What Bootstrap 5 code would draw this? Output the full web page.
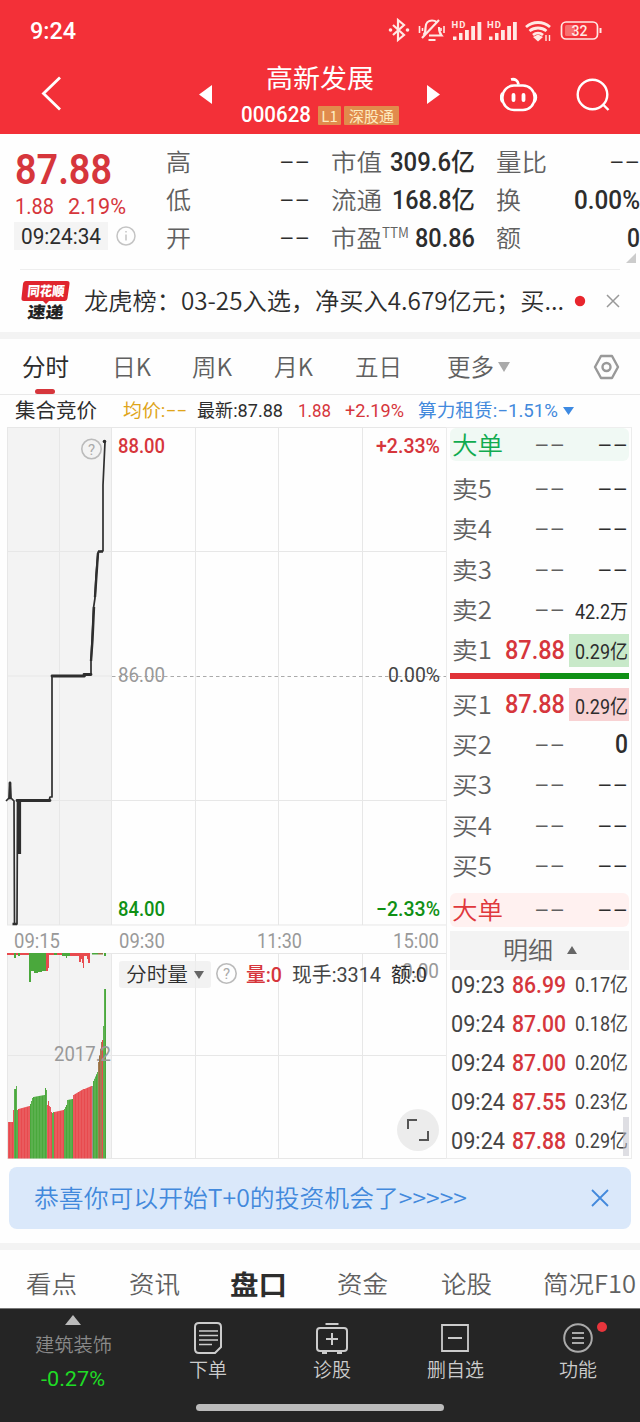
<!DOCTYPE html>
<html lang="zh-CN">
<head>
<meta charset="utf-8">
<meta name="viewport" content="width=device-width, initial-scale=1">
<title>高新发展 000628</title>
<link href="https://cdn.jsdelivr.net/npm/bootstrap@5.3.0/dist/css/bootstrap.min.css" rel="stylesheet">
<style>
:root{--up:#d6363c;--down:#0f9015;--ink:#2d2d2d;--sub:#606060}
body{width:640px;background:#fefefe;color:var(--ink);font-family:"Noto Sans CJK SC",sans-serif;font-weight:350;font-size:24px;line-height:1;overflow-x:hidden}
svg{display:block;flex:none}
.num{font-family:Roboto,"Noto Sans CJK SC",sans-serif;font-weight:400}
.fit{display:inline-block;white-space:pre;transform-origin:0 50%;flex:none;padding-bottom:2px}
.num .fit,.fit.num{padding-bottom:0}
.semi{font-weight:500}
.fit.num.semi{font-size:25px}
.up{color:var(--up)}.down{color:var(--down)}.sub{color:var(--sub)}.ink{color:var(--ink)}
.app-head{background:#f33038;color:#fff;height:134px}
.status{height:61px;padding:0 37px 0 30px}
.titlebar{height:73px;display:grid;grid-template-columns:199px 42px 158px 28px 73px 140px}
.tag{background:#e18b4c;color:#fdebc0;height:19px;font-size:15px;font-weight:400;border-radius:1px}
.quote{height:135px;padding-top:9px}
.quote-main{width:166px;padding-left:15px}
.quote-col{width:144px}
.quote-col+.quote-col{margin-left:21px}
.quote-col>div{height:38px}
.time-chip{background:#f4f4f4;width:94px;height:28px;margin-left:-1px;font-size:22.500px}
.corner{right:4px;bottom:6px}
.fit.dash{padding-bottom:6px}
.news{height:63px;margin:0 20px;border-top:1px solid #eee}
.strip{height:7px;background:#f3f3f3}
.tabs{height:56px;border-bottom:1px solid #e9e9e9;color:var(--sub)}
.tabs>div,.tabs2>div{height:100%;display:flex;align-items:center}
.mark-line{left:13px;bottom:0;width:20px;height:5.5px;background:var(--up);border-radius:3px}
.legend{height:32px;padding-left:15px;font-size:18px}
.main{height:732px}
.chart{width:446px;height:732px}
.book{width:186px;border:1px solid #ececec;border-top-color:#eee;padding:0 2px 0 3px}
.book-row{height:40.3px;padding:0 1px 0 2px;display:grid;grid-template-columns:56px 57px 1fr;align-items:center}
.big-row{border-radius:6px}
.book-row>:nth-child(1){justify-self:start}
.book-row>:nth-child(2),.book-row>:nth-child(3){justify-self:end}
.vol-cell{width:60px;height:33px;margin-right:-1px;padding:4px 1px 0 0;display:flex;align-items:center;justify-content:flex-end;font-size:20px}
.sell-best{background:#c8e9c9}.buy-best{background:#f8d2d3}
.ratio-bar{height:6px;background:var(--down);margin:3px 0 5px}
.ratio-bar div{height:6px;background:#e03238}
.detail-head{height:39px;background:#f3f3f3;color:var(--sub)}
#ticks{margin-top:-4px}
.tick{height:39px;padding:0 2px 0 1px;color:#444}
.pill{left:119px;top:534px;width:92px;height:27px;background:rgba(237,237,237,.75);border-radius:3px;font-size:20px}
.pill-info{left:216px;top:534px;height:27px;font-size:20px}
.pill-info .semi{font-size:20px}
.expand{left:397px;top:682px;width:42px;height:42px;background:#ececec}
.scroller{right:2px;bottom:2px;width:6px;height:39px;background:rgba(190,190,200,.5)}
.notice{height:62px;margin:8px 9px 14px;padding:0 22px 0 25px;border-radius:8px;background:#dae8fa;color:#4289dc}
.tabs2{height:58px;color:var(--sub);padding-top:10px}
.dock{height:114px;background:#252525;color:#ccc;border-top:1px solid #777}
.dock-item{width:123.5px;padding-top:12px;font-size:19px}
.dock-item svg{margin-bottom:4px}
.home-bar{left:196px;top:95px;width:248px;height:7px;border-radius:4px;background:#bbb}
</style>
</head>
<body>
<header class="app-head">
  <div class="status d-flex align-items-center justify-content-between">
    <span class="fit num semi" data-w="46" style="font-size:24px">9:24</span>
    <svg width="216" height="30" viewBox="388 16 216 30" fill="none" stroke="#ffe9e4" stroke-width="2.200">
      <path d="M394 25l11 10-6 5V20l6 5-11 10"/><g fill="#ffe9e4" stroke="none"><circle cx="391.500" cy="30" r="1.800"/><circle cx="408.500" cy="30" r="1.800"/></g>
      <path d="M424.500 35c2-2 2-4 2-7 0-5 3-7.500 6.500-7.500 2 0 3.500.5 4.500 1.500M440 27c0 4 .5 6 2.500 8.500H430M423 38l17-18M429.500 40h7"/><path d="M420.500 26v7M423.500 28v3M445 26v7M442 28v3" stroke-width="1.600"/>
      <g fill="#ffe9e4" stroke="none"><rect x="454" y="36.500" width="3.500" height="3.500"/><rect x="460" y="33" width="3.500" height="7"/><rect x="466" y="30" width="3.800" height="10"/><rect x="472.200" y="26" width="3.800" height="14"/><rect x="478.500" y="22" width="3.800" height="18"/>
      <rect x="490" y="36.500" width="3.500" height="3.500"/><rect x="496" y="33" width="3.500" height="7"/><rect x="502" y="30" width="3.800" height="10"/><rect x="508.200" y="26" width="3.800" height="14"/><rect x="514" y="22" width="3.800" height="18"/>
      <g font-family="Roboto,sans-serif" font-weight="700" font-size="9.500"><text x="452.500" y="28" textLength="14">HD</text><text x="488" y="28" textLength="14">HD</text></g>
      <path d="M534 37l5-2.500 5 2.500-5 4.500z"/></g>
      <path d="M527 27c7-6 17-6 24 0M530.500 31c5-4 12-4 17 0M534 35c3-2.500 7-2.500 10 0" stroke-width="2.800"/><path d="M547 35v6M550.500 35v6" stroke-width="1.400"/>
      <rect x="562.500" y="22" width="36" height="17" rx="4.500" stroke-width="1.700"/><rect x="566" y="25" width="10" height="11" rx="1.500" fill="#f8706f" stroke="none"/><path d="M601.500 28v5" stroke-width="2"/>
      <text x="572.500" y="35.700" font-family="Roboto,sans-serif" font-size="14" font-weight="500" fill="#ffe9e4" stroke="none" textLength="16">32</text>
    </svg>
  </div>
  <div class="titlebar">
    <svg width="199" height="66" viewBox="0 61 199 66"><path d="M60 77.500L43.500 93.500 60 109.500" fill="none" stroke="#fff" stroke-width="2.800"/></svg>
    <svg width="42" height="66" viewBox="199 61 42 66"><path d="M199 94.500L212 85v19z" fill="#fff"/></svg>
    <div>
      <div class="text-center" style="padding-top:3px;font-size:26px;font-weight:400"><span class="fit" data-w="108">高新发展</span></div>
      <div class="d-flex align-items-center" style="padding-top:12px">
        <span class="fit num semi" data-w="70" style="font-size:22px">000628</span>
        <span class="tag d-flex align-items-center justify-content-center" style="width:23px;margin-left:7px">L1</span>
        <span class="tag d-flex align-items-center justify-content-center" style="width:55px;margin-left:3px">深股通</span>
      </div>
    </div>
    <svg width="42" height="66" viewBox="399 61 42 66"><path d="M440 94.500L427 85v19z" fill="#fff"/></svg>
    <span></span>
    <svg width="140" height="66" viewBox="500 61 140 66" fill="none" stroke="#fff" stroke-width="2.400"><rect x="502.500" y="85.500" width="32" height="24.500" rx="11.500"/><path d="M511 79.500c4-1 7 1 7.500 5" stroke-width="2.800"/><path d="M502.500 93c-2 2.500-2 6.500 0 9M534.500 93c2 2.500 2 6.500 0 9"/><path d="M513.500 95v5M523.500 95v5" stroke-width="3.800" stroke-linecap="round"/><circle cx="592.500" cy="94.500" r="14.800"/><path d="M603 104.500l5.500 5.500"/></svg>
  </div>
</header>

<section class="quote d-flex position-relative">
  <div class="quote-main">
    <div class="up d-flex align-items-center" style="height:52px"><span class="fit num" data-w="97" style="font-size:43px;font-weight:600">87.88</span></div>
    <div class="up d-flex align-items-center num" style="height:23px;font-size:22.500px"><span class="fit" data-w="39">1.88</span><span class="fit" data-w="58" style="margin-left:14px">2.19%</span></div>
    <div class="d-flex align-items-center" style="padding-top:4px"><div class="time-chip num d-flex align-items-center justify-content-center"><span class="fit" data-w="80">09:24:34</span></div>
      <svg width="20" height="20" viewBox="0 0 20 20" style="margin-left:8px" fill="none" stroke="#c4c4c4" stroke-width="1.500"><circle cx="10" cy="10" r="9"/><path d="M10 5v1.500M10 8.500v6"/></svg></div>
  </div>
  <div class="quote-col sub">
    <div class="d-flex align-items-center justify-content-between"><span class="fit" data-w="25">高</span><span class="fit dash ink" data-w="31">--</span></div>
    <div class="d-flex align-items-center justify-content-between"><span class="fit" data-w="25">低</span><span class="fit dash ink" data-w="31">--</span></div>
    <div class="d-flex align-items-center justify-content-between"><span class="fit" data-w="25">开</span><span class="fit dash ink" data-w="31">--</span></div>
  </div>
  <div class="quote-col sub">
    <div class="d-flex align-items-center justify-content-between"><span class="fit" data-w="51">市值</span><span class="fit num semi ink" data-w="85">309.6亿</span></div>
    <div class="d-flex align-items-center justify-content-between"><span class="fit" data-w="51">流通</span><span class="fit num semi ink" data-w="83">168.8亿</span></div>
    <div class="d-flex align-items-center justify-content-between"><span class="d-flex"><span class="fit" data-w="51">市盈</span><span class="fit" data-w="27" style="font-size:14px">TTM</span></span><span class="fit num semi ink" data-w="60">80.86</span></div>
  </div>
  <div class="quote-col sub">
    <div class="d-flex align-items-center justify-content-between"><span class="fit" data-w="51">量比</span><span class="fit dash ink" data-w="31">--</span></div>
    <div class="d-flex align-items-center justify-content-between"><span class="fit" data-w="25">换</span><span class="fit num semi ink" data-w="66">0.00%</span></div>
    <div class="d-flex align-items-center justify-content-between"><span class="fit" data-w="25">额</span><span class="fit num semi ink" data-w="13">0</span></div>
  </div>
  <svg class="corner position-absolute" width="10" height="10"><path d="M10 0v10H0z" fill="#ccc"/></svg>
</section>

<section class="news d-flex align-items-center">
  <svg width="50" height="48" viewBox="20 277 50 48"><path d="M26 281h41q3 0 2.500 3l-2 14q-.5 3-3 3H49l-3 3-3-3H24q-3 0-2.500-3l1.500-14q.5-3 3-3z" fill="#e0252d"/><g font-family="'Noto Sans CJK SC',sans-serif" font-weight="900"><text transform="translate(27 296) skewX(-6)" font-size="13.500" fill="#fff" textLength="37" lengthAdjust="spacingAndGlyphs">同花顺</text><text transform="translate(27 318) skewX(-6)" font-size="16" fill="#222" textLength="36" lengthAdjust="spacingAndGlyphs">速递</text></g></svg>
  <span class="fit" data-w="480" style="margin-left:14px">龙虎榜：03-25入选，净买入4.679亿元；买...</span>
  <svg width="50" height="20" viewBox="570 291 50 20" style="margin-left:6px"><circle cx="580" cy="301" r="5.200" fill="#e8262d"/><path d="M607 295l12 12M619 295l-12 12" stroke="#999" stroke-width="1.500"/></svg>
</section>
<div class="strip"></div>

<nav class="tabs d-flex position-relative">
  <div class="ink position-relative" style="margin-left:22px;font-weight:400"><span class="fit" data-w="47">分时</span><i class="mark-line position-absolute"></i></div>
  <div style="margin-left:43px"><span class="fit" data-w="39">日K</span></div>
  <div style="margin-left:41px"><span class="fit" data-w="40">周K</span></div>
  <div style="margin-left:42px"><span class="fit" data-w="39">月K</span></div>
  <div style="margin-left:42px"><span class="fit" data-w="47">五日</span></div>
  <div style="margin-left:45px"><span class="fit" data-w="47">更多</span><svg width="12" height="12" style="margin-left:4px"><path d="M0 1h12L6 11z" fill="#aaa"/></svg></div>
  <div style="margin-left:83px"><svg width="28" height="26" viewBox="0 0 28 26" fill="none" stroke="#999" stroke-width="2.400"><path d="M8 2h11l6 11-6 11H8L2 13z" stroke-linejoin="round"/><circle cx="13.500" cy="13" r="4"/></svg></div>
</nav>

<div class="legend d-flex align-items-center num">
  <span class="fit" data-w="82" style="font-size:20px">集合竞价</span>
  <span class="fit" data-w="64" style="margin-left:26px;color:#dfa51a">均价:−−</span>
  <span class="fit" data-w="86" style="margin-left:10px">最新:87.88</span>
  <span class="fit up" data-w="33" style="margin-left:15px">1.88</span>
  <span class="fit up" data-w="59" style="margin-left:14px">+2.19%</span>
  <span class="fit" data-w="140" style="margin-left:14px;color:#4289dc">算力租赁:−1.51%</span>
  <svg width="11" height="8" style="margin-left:5px"><path d="M0 0h11L5.500 8z" fill="#3e8ae2"/></svg>
</div>

<main class="main d-flex">
  <div class="chart position-relative">
    <svg width="446" height="732" viewBox="0 427 446 732" font-family="Roboto,'Noto Sans CJK SC',sans-serif" font-weight="400">
      <path d="M7 427.500h104.500V925H7zM7 953h104.500v205.500H7z" fill="#f3f3f3"/>
      <path d="M7 427.500h439M7 551.500h439M7 676h105M7 800.500h439M7 925h439M7 953.500h439M7 1055.500h439M7 1158.500h439M7.500 427V925M59.500 427V925M111.500 427V925M195.500 427V925M278.500 427V925M362.500 427V925M7.500 953V1159M59.500 953V1159M111.500 953V1159M195.500 953V1159M278.500 953V1159M362.500 953V1159" stroke="#e7e7e7" fill="none"/>
      <path d="M112 676.500H446" stroke="#aaa" stroke-dasharray="3.500 3"/>
      <g id="bars"></g>
      <path d="M6 801l3-3 1-15 1 15 3 3 .500 123h2.500l.500-123h31.500l1-4h2V676H84l1-2h6v-13l1-21 1.500-32 1.500-10 1-22 2-24 5-1v-66l2-43" fill="none" stroke="#2e2e2e" stroke-width="1.700" stroke-linejoin="round"/>
      <path d="M52 676H84.500M84 674.500h7M17 800.500H50M10 783v15" stroke="#2e2e2e" stroke-width="2.800" stroke-linecap="round"/><path d="M19.300 801v53" stroke="#2e2e2e" stroke-width="3.600"/><path d="M98 551.500h5M91 661l1.500-21 1.500-33M95 597l1.500-22 1.500-22M12.500 924h4.500" stroke="#2e2e2e" stroke-width="2.400" fill="none"/><circle cx="104.500" cy="441.500" r="1.800" fill="#2e2e2e"/>
      <g fill="none" stroke="#bbb" stroke-width="1.600"><circle cx="91.500" cy="449" r="9.700"/><circle cx="226.500" cy="973.500" r="9.700"/></g>
      <g fill="#aaa" font-size="15" text-anchor="middle"><text x="91.500" y="454.500">?</text><text x="226.500" y="979">?</text></g>
      <g font-size="20.500">
        <g font-weight="500"><text x="118" y="452.500" fill="#d6363c" textLength="47" lengthAdjust="spacingAndGlyphs">88.00</text><text x="376" y="452.500" fill="#d6363c" textLength="64" lengthAdjust="spacingAndGlyphs">+2.33%</text>
        <text x="118" y="916" fill="#0f9015" textLength="47" lengthAdjust="spacingAndGlyphs">84.00</text><text x="376" y="916" fill="#0f9015" textLength="64" lengthAdjust="spacingAndGlyphs">−2.33%</text></g>
        <text x="118" y="681.500" fill="#999" textLength="47" lengthAdjust="spacingAndGlyphs">86.00</text><text x="388" y="681.500" fill="#444" textLength="52" lengthAdjust="spacingAndGlyphs">0.00%</text>
        <g fill="#999"><text x="14" y="947.500" textLength="46" lengthAdjust="spacingAndGlyphs">09:15</text><text x="119" y="947.500" textLength="46" lengthAdjust="spacingAndGlyphs">09:30</text><text x="257" y="947.500" textLength="45" lengthAdjust="spacingAndGlyphs">11:30</text><text x="393" y="947.500" textLength="46" lengthAdjust="spacingAndGlyphs">15:00</text>
        <text x="54" y="1060.500" textLength="57" lengthAdjust="spacingAndGlyphs">2017.2</text><text x="402" y="977.500" textLength="37" lengthAdjust="spacingAndGlyphs">0.00</text></g>
      </g>
    </svg>
    <div class="pill position-absolute d-flex align-items-center justify-content-center"><span class="fit" data-w="62">分时量</span><svg width="10" height="8" style="margin-left:6px"><path d="M0 0h10L5 8z" fill="#666"/></svg></div>
    <div class="pill-info position-absolute d-flex align-items-center num"><span class="fit semi up" data-w="36" style="margin-left:30px">量:0</span><span class="fit" data-w="89" style="margin-left:10px;color:#444">现手:3314</span><span class="fit" data-w="36" style="margin-left:10px">额:0</span></div>
    <div class="expand position-absolute rounded-circle d-flex align-items-center justify-content-center"><svg width="22" height="22" fill="none" stroke="#555" stroke-width="2"><path d="M1 10V1h9M21 12v9h-9"/></svg></div>
  </div>
  <div class="book position-relative">
    <div id="book"></div>
    <div class="detail-head d-flex align-items-center justify-content-center"><span class="fit" data-w="50">明细</span><svg width="10" height="8" style="margin-left:14px"><path d="M0 8h10L5 0z" fill="#666"/></svg></div>
    <div id="ticks"></div>
    <i class="scroller position-absolute"></i>
  </div>
</main>

<div class="notice d-flex align-items-center justify-content-between"><span class="fit" data-w="433">恭喜你可以开始T+0的投资机会了&gt;&gt;&gt;&gt;&gt;</span><svg width="18" height="18" stroke="#4289dc" stroke-width="1.800"><path d="M1 1l16 16M17 1L1 17"/></svg></div>
<div class="strip"></div>
<nav class="tabs2 d-flex">
  <div style="margin-left:26px"><span class="fit" data-w="51">看点</span></div>
  <div style="margin-left:52px"><span class="fit" data-w="51">资讯</span></div>
  <div style="margin-left:50px" class="ink"><span class="fit" data-w="57" style="font-size:27px;font-weight:700">盘口</span></div>
  <div style="margin-left:50px"><span class="fit" data-w="51">资金</span></div>
  <div style="margin-left:53px"><span class="fit" data-w="51">论股</span></div>
  <div style="margin-left:51px"><span class="fit" data-w="93">简况F10</span></div>
</nav>
<footer class="dock d-flex position-relative">
  <div class="d-flex flex-column align-items-center" style="width:147px;padding-top:6px"><svg width="16" height="10"><path d="M0 10h16L8 0z" fill="#bbb"/></svg><span class="fit" data-w="77" style="font-size:19px;margin-top:9px;color:#8a8a8a">建筑装饰</span><span class="fit num" data-w="64" style="font-size:20px;margin-top:14px;color:#1fdc25">-0.27%</span></div>
  <div class="dock-item d-flex flex-column align-items-center"><svg width="30" height="34" fill="none" stroke="#ccc" stroke-width="2"><path d="M6 2h18q4 0 4 4v20l-6 6H6q-4 0-4-4V6q0-4 4-4z"/><path d="M6 10h19M6 14.500h19M6 19h19M6 23.500h13" stroke-width="1.600"/></svg><span class="fit" data-w="38">下单</span></div>
  <div class="dock-item d-flex flex-column align-items-center"><svg width="34" height="34" fill="none" stroke="#ccc" stroke-width="2"><rect x="2" y="7" width="30" height="23" rx="3"/><path d="M10.500 3h13M17 12v12M11 18h12M7 32h5M22 32h5"/></svg><span class="fit" data-w="38">诊股</span></div>
  <div class="dock-item d-flex flex-column align-items-center"><svg width="30" height="34" fill="none" stroke="#ccc" stroke-width="1.800"><path d="M2 4h26v26H2zM8 17h14"/></svg><span class="fit" data-w="57">删自选</span></div>
  <div class="dock-item d-flex flex-column align-items-center"><svg width="62" height="34" fill="none" stroke="#aaa" stroke-width="2"><circle cx="31" cy="17" r="13.800"/><path d="M25 12h12M25 17h12M25 22h12"/><circle cx="55" cy="6" r="5" fill="#e8353c" stroke="none"/></svg><span class="fit" data-w="38">功能</span></div>
  <i class="home-bar position-absolute"></i>
</footer>

<script src="https://cdn.jsdelivr.net/npm/bootstrap@5.3.0/dist/js/bootstrap.bundle.min.js"></script>
<script>
(() => {
// order book
const dash = c => `<span class="fit dash ${c}" data-w="31">--</span>`;
const none = dash('ink');
const line = (name, price, vol) => `<div class="book-row"><span class="fit sub" data-w="40">${name}</span>${price ? `<span class="fit num semi up" data-w="60">${price}</span>` : dash('sub')}${vol}</div>`;
const big = (color, bg, h, mt, mb) => `<div class="book-row big-row" style="height:${h}px;margin:${mt}px 0 ${mb}px;background:${bg}"><span class="fit" data-w="51" style="color:${color}">大单</span>${dash('sub')}${none}</div>`;
const amt = (t, cls) => `<span class="vol-cell num ${cls}"><span class="fit" data-w="53">${t}</span></span>`;
document.getElementById('book').innerHTML =
  big('#10ab50', '#f0f9f4', 33, 0, 8) + line('卖5', '', none) + line('卖4', '', none) + line('卖3', '', none)
  + line('卖2', '', amt('42.2万', '')) + line('卖1', '87.88', amt('0.29亿', 'sell-best'))
  + '<div class="ratio-bar"><div style="width:50%"></div></div>'
  + line('买1', '87.88', amt('0.29亿', 'buy-best')) + line('买2', '', '<span class="fit num semi" data-w="13">0</span>')
  + line('买3', '', none) + line('买4', '', none) + line('买5', '', none) + big('#e0383c', '#fff1f0', 34, 7, 4);
document.getElementById('ticks').innerHTML = [['09:23','86.99','0.17'],['09:24','87.00','0.18'],['09:24','87.00','0.20'],['09:24','87.55','0.23'],['09:24','87.88','0.29']]
  .map(t => `<div class="tick num d-flex align-items-center"><span class="fit" data-w="54">${t[0]}</span><span class="fit semi up" data-w="54" style="margin-left:7px">${t[1]}</span><span class="fit" data-w="53" style="margin-left:9px;font-size:20px">${t[2]}亿</span></div>`).join('');

// volume bars: [from x, to x, top at start, top at end, colour]
const R = '#e84a4e', G = '#4aa83c', M = '#9a7040';
const runs = [[8,13,1122,1122,R],[13,14,1110,1110,R],[14,16,1089,1089,G],[16,17,1086,1086,G],[17,18,1110,1110,G],[18,30,1109,1106,R],[30,33,1104,1098,G],[33,45,1097,1095,G],[45,47,1088,1090,G],[47,48,1105,1105,R],[48,50,1101,1106,R],[50,52,1107,1112,R],[52,54,1113,1112,G],[54,64,1112,1110,R],[64,67,1109,1105,G],[67,73,1100,1099,G],[73,84,1095,1089,R],[84,92,1089,1086,R],[92,93,1086,1086,'#888'],[93,98,1081,1072,G],[98,102,1062,1042,M],[102,103,1040,1040,R],[103,104,1026,1026,G],[104,106,989,989,G]];
let s = '';
for (const [a, b, y0, y1, c] of runs) for (let x = a; x < b; x++) {
  const y = y0 + (y1 - y0) * (x - a) / Math.max(1, b - a - 1);
  s += `<rect x="${x}" y="${y}" width="1" height="${1158.5 - y}" fill="${c}" opacity="${x % 3 === 0 ? 1 : .9}"/>`;
}
// order imbalance hanging from the panel's top edge: [from x, to x, height, colour]
const hang = [[7,14,2,R],[14,16,5,G],[16,29,2,R],[18,20,3,G],[29,31,29,G],[31,34,18,G],[34,38,20,G],[38,42,19,G],[42,46,18,G],[46,48,18,R],[48,49,15,R],[49,62,2,R],[54,57,2,G],[62,70,3,G],[66,67,5,G],[70,79,3,R],[79,81,9,R],[81,82,6,R],[82,83,10,R],[83,84,15,R],[84,87,3,R],[87,88,6,R],[88,90,10,R],[92,98,1.5,G],[98,103,1.5,M],[104,106,3,G]];
for (const [a, b, h, c] of hang) s += `<rect x="${a}" y="953" width="${b - a}" height="${h}" fill="${c}"/>`;
document.getElementById('bars').innerHTML = s;

// condense or widen each label to its column width
document.querySelectorAll('.fit').forEach(el => {
  const n = el.getBoundingClientRect().width, w = +el.dataset.w;
  el.style.marginRight = (w - n) + 'px';
  el.style.transform = `scaleX(${w / n})`;
});
})();
</script>
</body>
</html>
